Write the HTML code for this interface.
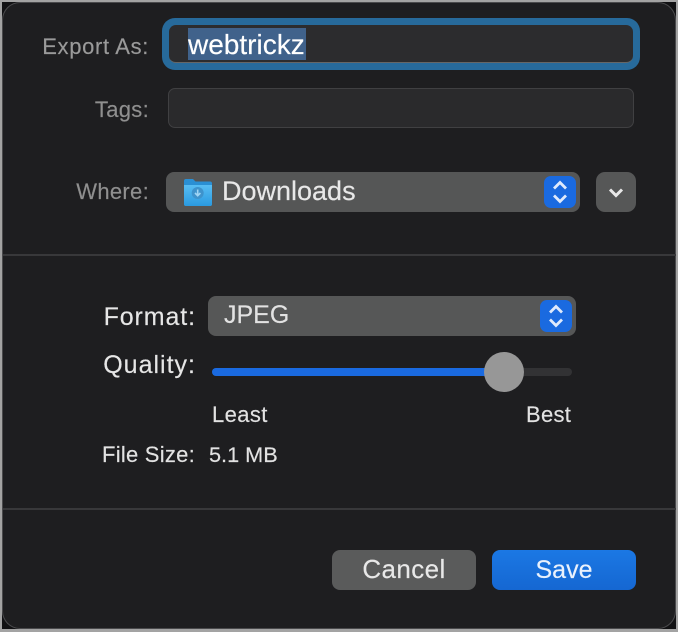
<!DOCTYPE html>
<html><head><meta charset="utf-8">
<style>
*{box-sizing:border-box}
html,body{margin:0;padding:0;width:678px;height:632px;overflow:hidden;background:#1c1c1e;font-family:"Liberation Sans",sans-serif}
#frame{position:absolute;left:0;top:0;width:678px;height:632px;border:solid #a3a3a3;border-width:2px 2px 3px 2px;background:#111113}
#win{position:absolute;left:0;top:0;width:674px;height:627px;background:#1e1e20;border-radius:18px;box-shadow:inset 0 0 0 1px #4a4a4c}
.abs{position:absolute}
.t{position:absolute;white-space:nowrap;line-height:1;-webkit-text-stroke:.15px currentColor}
.hr{position:absolute;left:3px;width:673px;height:2px;background:#38383a}
</style></head><body>
<div id="frame"><div id="win"></div></div>

<div class="t" style="right:529px;top:36px;font-size:22px;letter-spacing:.65px;color:#9a9a9a">Export As:</div>
<div class="abs" style="left:162px;top:18px;width:478px;height:52px;background:#276a9b;border-radius:13px"></div>
<div class="abs" style="left:169px;top:25px;width:464px;height:38px;background:#2c2c2e;border-radius:7px;border-bottom:1px solid #666"></div>
<div class="abs" style="left:188px;top:28px;width:118px;height:32px;background:#40628b"></div>
<div class="t" style="left:188px;top:31px;font-size:28px;color:#fff">webtrickz</div>

<div class="t" style="right:529px;top:99px;font-size:22px;letter-spacing:.3px;color:#8f8f8f">Tags:</div>
<div class="abs" style="left:168px;top:88px;width:466px;height:40px;background:#2a2a2c;border:1px solid #404042;border-radius:7px"></div>

<div class="t" style="right:529px;top:181px;font-size:22px;letter-spacing:.3px;color:#8f8f8f">Where:</div>
<div class="abs" style="left:166px;top:172px;width:414px;height:40px;background:#555656;border-radius:8px"></div>
<svg class="abs" style="left:183px;top:178px" width="32" height="30" viewBox="0 0 32 30">
<defs><linearGradient id="fg" x1="0" y1="0" x2="0" y2="1"><stop offset="0" stop-color="#58bdf3"/><stop offset="1" stop-color="#2a9ae0"/></linearGradient></defs>
<path d="M1 3a2 2 0 0 1 2-2h7l2.500 2.500H27a2 2 0 0 1 2 2V26a2 2 0 0 1-2 2H3a2 2 0 0 1-2-2z" fill="#2a8fd4"/>
<path d="M1 7h28v19a2 2 0 0 1-2 2H3a2 2 0 0 1-2-2z" fill="url(#fg)"/>
<circle cx="14.700" cy="15" r="6" fill="#3e93cc"/>
<path d="M14.700 11.500v6M12 15l2.700 2.700 2.700-2.700" fill="none" stroke="#9fd5f5" stroke-width="1.600"/>
</svg>
<div class="t" style="left:222px;top:178px;font-size:27px;color:#e8e8e8">Downloads</div>
<div class="abs" style="left:544px;top:176px;width:32px;height:32px;background:#1a6ae0;border-radius:7px"></div>
<svg class="abs" style="left:544px;top:176px" width="32" height="32" viewBox="0 0 32 32"><path d="M10 12.500l6-6 6 6M10 19.500l6 6 6-6" fill="none" stroke="#dfeafc" stroke-width="2.800"/></svg>
<div class="abs" style="left:596px;top:172px;width:40px;height:40px;background:#565757;border-radius:9px"></div>
<svg class="abs" style="left:596px;top:172px" width="40" height="40" viewBox="0 0 40 40"><path d="M14 17.500l6 6 6-6" fill="none" stroke="#e8e8e8" stroke-width="3"/></svg>

<div class="hr" style="top:254px"></div>

<div class="t" style="right:482px;top:305px;font-size:25px;letter-spacing:.9px;color:#e6e6e6">Format:</div>
<div class="abs" style="left:208px;top:296px;width:368px;height:40px;background:#565757;border-radius:8px"></div>
<div class="t" style="left:224px;top:303px;font-size:25px;color:#e2e2e2">JPEG</div>
<div class="abs" style="left:540px;top:300px;width:32px;height:32px;background:#1a6ae0;border-radius:7px"></div>
<svg class="abs" style="left:540px;top:300px" width="32" height="32" viewBox="0 0 32 32"><path d="M10 12.500l6-6 6 6M10 19.500l6 6 6-6" fill="none" stroke="#dfeafc" stroke-width="2.800"/></svg>

<div class="t" style="right:482px;top:353px;font-size:25px;letter-spacing:1px;color:#e6e6e6">Quality:</div>
<div class="abs" style="left:212px;top:368px;width:360px;height:8px;background:#323234;border-radius:4px"></div>
<div class="abs" style="left:212px;top:368px;width:290px;height:8px;background:#1a6ae0;border-radius:4px 0 0 4px"></div>
<div class="abs" style="left:484px;top:352px;width:40px;height:40px;background:#979797;border-radius:50%"></div>
<div class="t" style="left:212px;top:404px;font-size:22px;letter-spacing:.4px;color:#e2e2e2">Least</div>
<div class="t" style="left:526px;top:404px;font-size:22px;letter-spacing:.3px;color:#e2e2e2">Best</div>
<div class="t" style="left:102px;top:444px;font-size:22px;letter-spacing:.25px;color:#e2e2e2">File Size:</div>
<div class="t" style="left:209px;top:444px;font-size:21.700px;color:#e2e2e2">5.1 MB</div>

<div class="hr" style="top:508px"></div>

<div class="abs" style="left:332px;top:550px;width:144px;height:40px;background:#5a5b5b;border-radius:8px"></div>
<div class="t" style="left:332px;width:144px;text-align:center;top:556px;font-size:26px;letter-spacing:.4px;color:#e8e8e8">Cancel</div>
<div class="abs" style="left:492px;top:550px;width:144px;height:40px;background:linear-gradient(#1b78e4,#1567d2);border-radius:8px"></div>
<div class="t" style="left:492px;width:144px;text-align:center;top:558px;font-size:25px;color:#e9f1fc">Save</div>
</body></html>
